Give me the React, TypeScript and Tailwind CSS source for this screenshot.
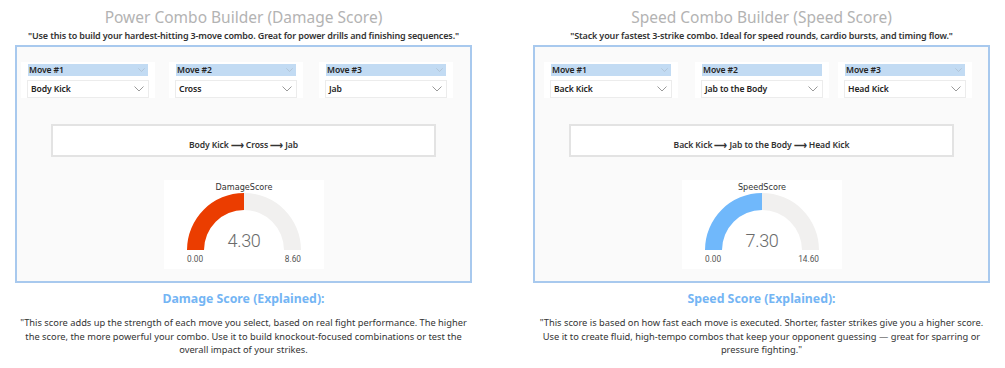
import React from "react";

const SEGOE = { fontFamily: '"Noto Sans", "Open Sans", sans-serif' };

function Chevron({ size = 9, color = "#9a9a9a" }: { size?: number; color?: string }) {
  return (
    <svg width={size} height={size * 0.6} viewBox="0 0 10 6" fill="none">
      <path d="M0.5 0.5 L5 5 L9.5 0.5" stroke={color} strokeWidth="0.9" />
    </svg>
  );
}

function Slicer({ label, value, cls, chevHeader = true }: { label: string; value: string; cls: string; chevHeader?: boolean }) {
  return (
    <div className={`bg-white w-[134px] h-[36px] pt-[2px] px-[6px] flex flex-col ${cls}`}>
      <div className="h-[12px] bg-[#c2dbf3] mx-[1px] flex items-center justify-between pl-[1px] pr-[3px]">
        <span className="text-[8.6px] font-semibold text-[#252423] leading-none tracking-[-0.1px]">{label}</span>
        {chevHeader && <Chevron size={7} color="#a9b9c9" />}
      </div>
      <div className="mt-[4px] h-[18px] border border-[#ececec] bg-white flex items-center justify-between pl-[3px] pr-[4px]">
        <span className="text-[8.6px] font-semibold text-[#252423] leading-none tracking-[-0.1px]">{value}</span>
        <Chevron size={10} color="#8f8f8f" />
      </div>
    </div>
  );
}

function Gauge({ title, value, max, color }: { title: string; value: string; max: string; color: string }) {
  const cx = 80, cy = 70, R = 57, r = 40;
  const red = `M ${cx - R} ${cy} A ${R} ${R} 0 0 1 ${cx} ${cy - R} L ${cx} ${cy - r} A ${r} ${r} 0 0 0 ${cx - r} ${cy} Z`;
  const gray = `M ${cx} ${cy - R} A ${R} ${R} 0 0 1 ${cx + R} ${cy} L ${cx + r} ${cy} A ${r} ${r} 0 0 0 ${cx} ${cy - r} Z`;
  return (
    <div className="bg-white w-[160px] h-[89px] relative mx-auto mt-[23px]">
      <svg width="160" height="89" viewBox="0 0 160 89" className="block">
        <text x="80" y="9.5" textAnchor="middle" fontSize="9" fill="#333" fontFamily='"DejaVu Sans Condensed", "Roboto", sans-serif'>{title}</text>
        <path d={gray} fill="#f1f0ef" />
        <path d={red} fill={color} />
        <text x="80" y="66.5" textAnchor="middle" fontSize="18" fill="#6b6b6b" fontFamily='"Roboto", sans-serif' fontWeight="300" letterSpacing="-0.3">{value}</text>
        <text x="23" y="81.5" fontSize="8.3" fill="#555" fontFamily='"Roboto", sans-serif'>0.00</text>
        <text x="137" y="81.5" textAnchor="end" fontSize="8.3" fill="#555" fontFamily='"Roboto", sans-serif'>{max}</text>
      </svg>
    </div>
  );
}

function Panel(props: {
  title: string;
  subtitle: string;
  moves: [string, string, string];
  slicerCls: [string, string, string];
  combo: string;
  gaugeTitle: string;
  value: string;
  max: string;
  color: string;
  explTitle: string;
  lines: string[];
  showHeaderChev?: [boolean, boolean, boolean];
}) {
  const chev = props.showHeaderChev ?? [true, true, true];
  return (
    <div className="w-[487px] flex flex-col items-center" style={SEGOE}>
      <div className="h-[29px] pt-[6px] text-[15.5px] leading-[22px] text-[#b3b3b3]">{props.title}</div>
      <div className="h-[16px] text-[9px] leading-[14px] font-semibold text-[#333] tracking-[-0.15px]">{props.subtitle}</div>
      <div className="w-[457px] h-[238px] border-2 border-[#a8c9ee] bg-[#fafafa] flex flex-col">
        <div className="flex mt-[15px]">
          {props.moves.map((m, i) => (
            <Slicer key={i} label={`Move #${i + 1}`} value={m} cls={props.slicerCls[i]} chevHeader={chev[i]} />
          ))}
        </div>
        <div className="mx-auto mt-[26px] w-[385px] h-[33px] bg-white border-2 border-[#e3e3e3] flex items-end justify-center pb-[5px]">
          <span className="text-[8.6px] font-semibold text-[#333] leading-none tracking-[-0.1px]">{props.combo}</span>
        </div>
        <Gauge title={props.gaugeTitle} value={props.value} max={props.max} color={props.color} />
      </div>
      <div className="mt-[7px] text-[12.3px] font-bold text-[#74b5f4] leading-[17px]">{props.explTitle}</div>
      <div className="mt-[9px] text-[9.3px] text-[#333] leading-[13.5px] text-center">
        {props.lines.map((l, i) => (
          <div key={i} className="whitespace-nowrap">{l}</div>
        ))}
      </div>
    </div>
  );
}

export default function App() {
  return (
    <div className="w-[1005px] h-[368px] bg-white flex gap-[31px] overflow-hidden">
      <Panel
        title="Power Combo Builder (Damage Score)"
        subtitle={'"Use this to build your hardest-hitting 3-move combo. Great for power drills and finishing sequences."'}
        moves={["Body Kick", "Cross", "Jab"]}
        slicerCls={["ml-[4px]", "ml-[14px]", "ml-[16px]"]}
        combo="Body Kick ⟶ Cross ⟶ Jab"
        gaugeTitle="DamageScore"
        value="4.30"
        max="8.60"
        color="#eb3d00"
        explTitle="Damage Score (Explained):"
        lines={[
          '"This score adds up the strength of each move you select, based on real fight performance. The higher',
          "the score, the more powerful your combo. Use it to build knockout-focused combinations or test the",
          "overall impact of your strikes.",
        ]}
      />
      <Panel
        title="Speed Combo Builder (Speed Score)"
        subtitle={'"Stack your fastest 3-strike combo. Ideal for speed rounds, cardio bursts, and timing flow."'}
        moves={["Back Kick", "Jab to the Body", "Head Kick"]}
        slicerCls={["ml-[9px]", "ml-[17px]", "ml-[9px]"]}
        showHeaderChev={[true, false, true]}
        combo="Back Kick ⟶ Jab to the Body ⟶ Head Kick"
        gaugeTitle="SpeedScore"
        value="7.30"
        max="14.60"
        color="#70b8fb"
        explTitle="Speed Score (Explained):"
        lines={[
          '"This score is based on how fast each move is executed. Shorter, faster strikes give you a higher score.',
          "Use it to create fluid, high-tempo combos that keep your opponent guessing — great for sparring or",
          'pressure fighting."',
        ]}
      />
    </div>
  );
}
